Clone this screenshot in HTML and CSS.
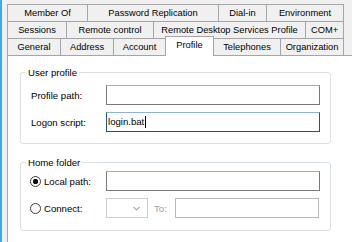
FILE: index.html
```html
<!DOCTYPE html>
<html>
<head>
<meta charset="utf-8">
<link rel="stylesheet" href="styles.css">
</head>
<body>
<div class="window">
  <div class="tabs">
    <div class="row row1">
      <div class="tab">Member Of</div>
      <div class="tab">Password Replication</div>
      <div class="tab">Dial-in</div>
      <div class="tab last">Environment</div>
    </div>
    <div class="row row2">
      <div class="tab">Sessions</div>
      <div class="tab">Remote control</div>
      <div class="tab">Remote Desktop Services Profile</div>
      <div class="tab last">COM+</div>
    </div>
    <div class="row row3">
      <div class="tab">General</div>
      <div class="tab">Address</div>
      <div class="tab">Account</div>
      <div class="tab sel">Profile</div>
      <div class="tab">Telephones</div>
      <div class="tab last">Organization</div>
    </div>
  </div>
  <div class="panel">
    <fieldset class="group group-profile">
      <legend>User profile</legend>
      <div class="field">
        <span class="label">Profile path:</span>
        <div class="input"></div>
      </div>
      <div class="field gap">
        <span class="label">Logon script:</span>
        <div class="input focus">login.bat<span class="caret"></span></div>
      </div>
    </fieldset>
    <fieldset class="group group-home">
      <legend>Home folder</legend>
      <div class="field">
        <span class="radio on"></span>
        <span class="label rlabel">Local path:</span>
        <div class="input"></div>
      </div>
      <div class="field gap">
        <span class="radio"></span>
        <span class="label rlabel">Connect:</span>
        <div class="select">
          <svg width="7" height="5" viewBox="0 0 7 5"><path d="M0.5 0.8 L3.5 3.8 L6.5 0.8" fill="none" stroke="#a8a8a8" stroke-width="1.2"/></svg>
        </div>
        <span class="to">To:</span>
        <div class="input disabled"></div>
      </div>
    </fieldset>
  </div>
</div>
</body>
</html>
```
FILE: styles.css
```css
html, body {
  margin: 0;
  padding: 0;
}
body {
  background: #f0f0f0;
  overflow: hidden;
  width: 352px;
  height: 242px;
  font-family: "Liberation Sans", Arial, sans-serif;
  font-size: 9.3px;
  color: #000;
}
.window {
  border-left: 2px solid #48a8e4;
  height: 242px;
  box-sizing: border-box;
  padding: 4px 0 0 5px;
  display: flex;
  flex-direction: column;
}
.tabs {
  width: 337px;
  flex: none;
}
.row {
  display: grid;
  height: 17px;
}
.row1 { grid-template-columns: 80px 131px 48px 78px; }
.row2 { grid-template-columns: 59px 87px 152px 39px; }
.row3 { grid-template-columns: 53px 53px 52px 48px 67px 64px; }
.tab {
  box-sizing: border-box;
  border-top: 1px solid #a5a5a5;
  border-left: 1px solid #a5a5a5;
  background: #f0f0f0;
  text-align: center;
  line-height: 16px;
  white-space: nowrap;
}
.tab.last {
  border-right: 1px solid #a5a5a5;
}
.tab.sel {
  background: #fff;
  border-right: 1px solid #a5a5a5;
  margin: -2px -1px -1px 0;
  z-index: 1;
}
.panel {
  flex: 1;
  min-height: 0;
  overflow: hidden;
  background: #fff;
  border-top: 1px solid #a5a5a5;
  border-left: 1px solid #a5a5a5;
  width: 345px;
  box-sizing: border-box;
  padding: 10px 0 0 12px;
  font-size: 9.6px;
}
.group {
  width: 311px;
  box-sizing: border-box;
  margin: 0;
  border: 1px solid #d8e0e6;
  border-radius: 3px;
  min-inline-size: 0;
}
.group-profile {
  padding: 6px 9px 11px 10px;
}
.group-home {
  margin-top: 12px;
  padding: 2px 9px 12px 10px;
}
legend {
  padding: 0 2px;
  margin-left: -5px;
  line-height: 13px;
}
.field {
  display: flex;
  align-items: center;
  height: 20px;
}
.field.gap {
  margin-top: 7px;
}
.label {
  width: 75px;
  flex: none;
}
.radio {
  width: 11px;
  height: 11px;
  box-sizing: border-box;
  border: 1px solid #3c3c3c;
  border-radius: 50%;
  background: #fff;
  margin-left: -1px;
  margin-right: 3px;
  flex: none;
}
.radio.on {
  background: radial-gradient(circle, #111 0 2.4px, #fff 3px);
}
.rlabel {
  width: 62px;
}
.input {
  width: 214px;
  height: 20px;
  box-sizing: border-box;
  border: 1px solid #7a7a7a;
  border-top-color: #ababab;
  background: #fff;
  padding-left: 1px;
  line-height: 18px;
  flex: none;
  display: flex;
  align-items: center;
}
.input.focus {
  border-color: #8db2d2 #1e5284 #1e5284 #1e5284;
}
.caret {
  display: inline-block;
  width: 1px;
  height: 12px;
  background: #000;
  margin-left: 1px;
}
.select {
  width: 42px;
  height: 20px;
  box-sizing: border-box;
  border: 1px solid #cccccc;
  display: flex;
  justify-content: flex-end;
  align-items: center;
  padding-right: 7px;
  flex: none;
}
.to {
  color: #a0a0a0;
  margin-left: 6px;
  width: 21px;
  flex: none;
}
.input.disabled {
  width: 144px;
  border-color: #b8b8b8;
}
```
